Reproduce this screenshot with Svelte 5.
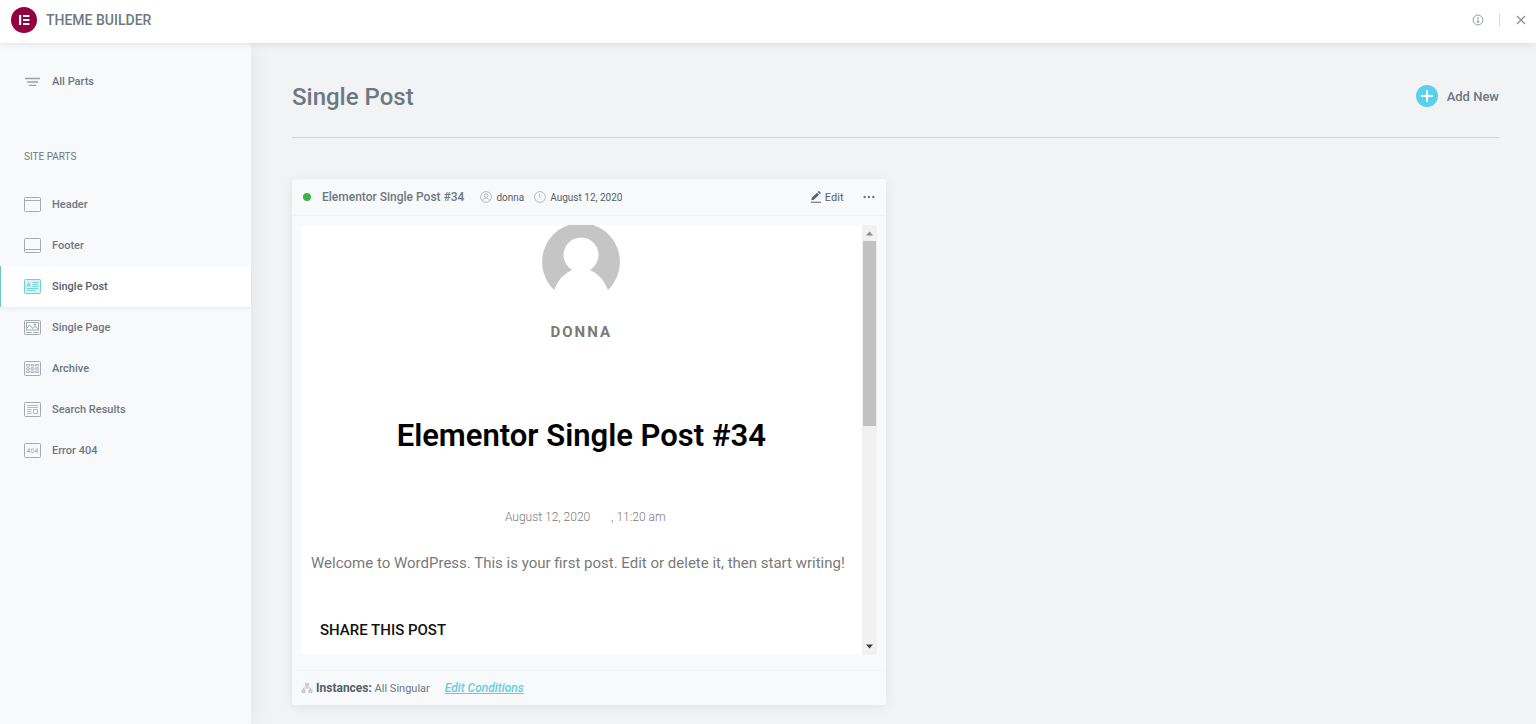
<script>
  const parts = [
    { id: 'header', label: 'Header' },
    { id: 'footer', label: 'Footer' },
    { id: 'post', label: 'Single Post' },
    { id: 'page', label: 'Single Page' },
    { id: 'archive', label: 'Archive' },
    { id: 'search', label: 'Search Results' },
    { id: 'error', label: 'Error 404' }
  ];
  let active = $state('post');
</script>

<div class="app">
  <header class="topbar">
    <svg class="logo" viewBox="0 0 26 26" aria-hidden="true">
      <circle cx="13" cy="13" r="13" fill="#93003f" />
      <path d="M8 8h2.2v10H8zM12 8h6.4v2.1H12zM12 12h6.4v2.1H12zM12 15.9h6.4V18H12z" fill="#fff" />
    </svg>
    <h1>Theme Builder</h1>
    <div class="tools">
      <button aria-label="Info">
        <svg width="12" height="12" viewBox="0 0 12 12" fill="none" stroke="#8d9499">
          <circle cx="6" cy="6" r="4.9" stroke-width="0.9" />
          <path d="M6 3v5.400M4.500 7.600L6 8.600l1.500-1" stroke-width="0.9" />
        </svg>
      </button>
      <span class="divider"></span>
      <button aria-label="Close">
        <svg width="12" height="12" viewBox="0 0 12 12" fill="none" stroke="#8d9499" stroke-width="1.4">
          <path d="M2 2l8 8M10 2l-8 8" />
        </svg>
      </button>
    </div>
  </header>

  <div class="body">
    <nav class="sidebar" aria-label="Site parts">
      <a class="item" href="#all">
        <svg class="part" viewBox="0 0 17 15" fill="none" stroke="#98a2a8" stroke-width="1.300">
          <path d="M1 4.500h15M3 8h11M4.800 11.300h7.400" />
        </svg>
        All Parts
      </a>
      <h2>Site Parts</h2>
      <ul>
        {#each parts as part}
          <li>
            <a
              class="item"
              class:active={active === part.id}
              href="#{part.id}"
              onclick={() => (active = part.id)}
            >
              <svg class="part" viewBox="0 0 17 15" fill="none" stroke="currentColor" stroke-width="1">
                <rect x="0.5" y="0.5" width="16" height="14" rx="0.8" />
                {#if part.id === 'header'}
                  <path d="M.5 3.500h16" />
                {:else if part.id === 'footer'}
                  <path d="M.5 11.500h16" />
                {:else if part.id === 'post'}
                  <rect x="1" y="1" width="15" height="13" fill="#d8f3f5" stroke="none" />
                  <path d="M2.800 8l1.800-4.500L6.400 8M3.400 6.500h2.400M8.500 3.500h6M8.500 5.500h6M8.500 7.500h6M2.500 9.500h12M2.500 11.500h9" stroke-width="0.9" />
                {:else if part.id === 'page'}
                  <rect x="2.500" y="2.500" width="12" height="7.500" />
                  <path d="M2.500 8.500l3.200-3.500 3 3.500 2.300-2 3.500 2.500M2.300 12.500h5.500M9.500 12.500h5.200" />
                  <circle cx="11" cy="4.700" r="0.900" />
                {:else if part.id === 'archive'}
                  <path d="M2.500 3.500h3v1.500h-3zM7 3.500h3v1.500h-3zM11.500 3.500h3v1.500h-3zM2.500 6.800h3v1.500h-3zM7 6.800h3v1.500h-3zM11.500 6.800h3v1.500h-3zM2.500 10h3v1.500h-3zM7 10h3v1.500h-3zM11.500 10h3v1.500h-3z" stroke-width="0.8" />
                {:else if part.id === 'search'}
                  <path d="M3 3.500h11M3 5.500h11M3 7.500h4.500M3 9.500h4.500M3 11.500h4.500M9.500 7.500h4v4h-4z" stroke-width="0.8" />
                {:else}
                  <path d="M5.200 10V5.500L3 8.500h3M13.200 10V5.500L11 8.500h3" stroke-width="0.8" />
                  <rect x="7.300" y="5.700" width="2.400" height="4" rx="1.100" stroke-width="0.8" />
                {/if}
              </svg>
              {part.label}
            </a>
          </li>
        {/each}
      </ul>
    </nav>

    <main>
      <div class="title-row">
        <h2>Single Post</h2>
        <button class="add">
          <svg width="22" height="22" viewBox="0 0 22 22" aria-hidden="true">
            <circle cx="11" cy="11" r="11" fill="#58d0f0" />
            <path d="M11 5v12M5 11h12" stroke="#fff" stroke-width="2" />
          </svg>
          Add New
        </button>
      </div>

      <div class="grid">
        <article class="card">
          <div class="card-head">
            <span class="dot"></span>
            <h3>Elementor Single Post #34</h3>
            <span class="meta">
              <svg width="12" height="12" viewBox="0 0 12 12" fill="none" stroke="#b4babf">
                <circle cx="6" cy="6" r="5.400" />
                <circle cx="6" cy="4.600" r="1.800" />
                <path d="M2.500 9.800c.4-2 1.700-2.800 3.500-2.800s3.100.8 3.500 2.800" />
              </svg>
              donna
            </span>
            <span class="meta">
              <svg width="12" height="12" viewBox="0 0 12 12" fill="none" stroke="#b4babf">
                <circle cx="6" cy="6" r="5.400" />
                <path d="M5.700 3v3.200l1.600 1.400" />
              </svg>
              August 12, 2020
            </span>
            <button class="edit">
              <svg width="12" height="12" viewBox="0 0 12 12" fill="#556068" aria-hidden="true">
                <path d="M1.300 9.300l.5-2.500L7 1.700l2.100 2.100-5.200 5zM7.700 1l.7-.7c.3-.3.700-.3 1 0l1.100 1.100c.3.300.3.700 0 1l-.7.700zM1 10.700h10v1H1z" />
              </svg>
              Edit
            </button>
            <button aria-label="More actions">
              <svg width="12" height="4" viewBox="0 0 12 4" fill="#6d7882">
                <circle cx="1.700" cy="2" r="1.200" /><circle cx="6" cy="2" r="1.200" /><circle cx="10.300" cy="2" r="1.200" />
              </svg>
            </button>
          </div>

          <div class="preview">
            <div class="page">
              <svg width="78" height="70" viewBox="0 0 78 70" aria-hidden="true">
                <path
                  fill="#c5c5c5"
                  d="M26.700 0H51.300A39 39 0 0 1 66 65Q60 50 48 45A17.500 17.500 0 1 0 30 45Q18 50 12 65A39 39 0 0 1 26.700 0z"
                />
              </svg>
              <p class="author">Donna</p>
              <h4>Elementor Single Post #34</h4>
              <p class="stamp"><span>August 12, 2020</span><span>, 11:20 am</span></p>
              <p class="welcome">
                Welcome to WordPress. This is your first post. Edit or delete it, then start writing!
              </p>
              <h5>Share this post</h5>
            </div>
            <div class="scroll" aria-hidden="true">
              <svg width="15" height="16" viewBox="0 0 15 16"><path d="M4 10.500l3.500-4 3.500 4z" fill="#8c8c8c" /></svg>
              <div class="thumb"></div>
              <svg width="15" height="16" viewBox="0 0 15 16"><path d="M4 5.500h7l-3.500 4z" fill="#404040" /></svg>
            </div>
          </div>

          <div class="card-foot">
            <svg width="12" height="12" viewBox="0 0 12 12" fill="#d5d9dc" stroke="#b8bdc1" stroke-width="0.8" aria-hidden="true">
              <rect x="4.500" y="1.500" width="3" height="2.500" />
              <rect x="1" y="8" width="3" height="2.500" />
              <rect x="8" y="8" width="3" height="2.500" />
              <path d="M6 4v2M2.500 8V6h7v2" fill="none" />
            </svg>
            <span><strong>Instances:</strong> All Singular</span>
            <a href="#conditions">Edit Conditions</a>
          </div>
        </article>
      </div>
    </main>
  </div>
</div>

<style>
  :global(body) {
    background: #f1f3f5;
  }
  .app {
    min-height: 100vh;
    display: flex;
    flex-direction: column;
    font-family: Roboto, sans-serif;
    font-size: 11px;
    color: #6d7882;
  }
  h1, h2, h3, h4, h5, p, ul {
    margin: 0;
    padding: 0;
    font-weight: 500;
  }
  ul {
    list-style: none;
  }
  button {
    display: flex;
    align-items: center;
    padding: 0;
    border: 0;
    background: none;
    font: inherit;
    color: inherit;
    cursor: pointer;
  }
  a {
    color: inherit;
    text-decoration: none;
  }
  svg {
    flex: none;
    display: block;
  }
  .topbar {
    position: relative;
    z-index: 1;
    display: flex;
    align-items: center;
    height: 43px;
    box-sizing: border-box;
    padding: 0 9px 3px 11px;
    background: #fff;
    box-shadow: 0 0 8px rgba(0, 0, 0, 0.12);
  }
  .logo {
    width: 26px;
    height: 26px;
    margin-right: 9px;
  }
  h1 {
    font-size: 14px;
    text-transform: uppercase;
  }
  .tools {
    display: flex;
    align-items: center;
    gap: 15px;
    margin-left: auto;
  }
  .divider {
    width: 1px;
    height: 12px;
    background: #d5dadf;
  }
  .body {
    flex: 1;
    display: flex;
  }
  .sidebar {
    flex: none;
    width: 251px;
    padding-top: 18px;
    background: #f7f9fb;
    box-shadow: 0 0 24px rgba(0, 0, 0, 0.07);
  }
  .item {
    display: flex;
    align-items: center;
    gap: 11px;
    height: 41px;
    box-sizing: border-box;
    padding-left: 24px;
    font-weight: 500;
  }
  .part {
    width: 17px;
    height: 15px;
    color: #a4abb1;
  }
  .active {
    padding-left: 23px;
    border-left: 1px solid #6ec5cb;
    background: #fff;
    color: #556068;
    box-shadow: 0 2px 4px rgba(0, 0, 0, 0.05);
  }
  .active .part {
    color: #6fcfd6;
  }
  .sidebar h2 {
    margin: 45px 0 17px 24px;
    font-size: 10px;
    line-height: 20px;
    font-weight: 400;
    text-transform: uppercase;
  }
  main {
    flex: 1;
    min-width: 0;
    padding: 31px 37px 19px 41px;
  }
  .title-row {
    display: flex;
    align-items: flex-start;
    justify-content: space-between;
    height: 63px;
    border-bottom: 1px solid #d0d5d9;
  }
  .title-row h2 {
    font-size: 24px;
    line-height: 46px;
  }
  .add {
    gap: 9px;
    height: 44px;
    font-size: 13px;
    font-weight: 500;
  }
  .grid {
    display: grid;
    grid-template-columns: 1fr 1fr;
    gap: 20px;
    margin-top: 41px;
  }
  .card {
    border-radius: 3px;
    background: #f8f9fb;
    box-shadow: 0 2px 12px rgba(0, 0, 0, 0.07);
  }
  .card-head {
    display: flex;
    align-items: center;
    height: 36px;
    padding: 0 11px;
    border-bottom: 1px solid #f1f3f5;
  }
  .dot {
    width: 8px;
    height: 8px;
    margin-right: 11px;
    border-radius: 50%;
    background: #39b54a;
  }
  h3 {
    margin-right: 16px;
    font-size: 12px;
  }
  .meta {
    display: flex;
    align-items: center;
    gap: 4px;
    margin-right: 10px;
    font-size: 10px;
    color: #556068;
  }
  .edit {
    gap: 3px;
    margin-left: auto;
    margin-right: 19px;
    color: #556068;
  }
  .preview {
    display: flex;
    margin: 9px 9px 15px;
    border-radius: 3px;
    overflow: hidden;
    background: #fff;
  }
  .page {
    flex: 1;
    min-width: 0;
    display: flex;
    flex-direction: column;
    align-items: center;
    padding: 0 10px 12px;
    color: #7a7a7a;
  }
  .author {
    margin-top: 26px;
    font-size: 15px;
    line-height: 22px;
    font-weight: 700;
    letter-spacing: 2px;
    text-transform: uppercase;
  }
  h4 {
    margin-top: 73px;
    font-size: 31px;
    line-height: 40px;
    font-weight: 600;
    color: #000;
  }
  .stamp {
    display: flex;
    gap: 21px;
    margin: 51px 0 0 8px;
    font-size: 12px;
    line-height: 20px;
    font-weight: 300;
  }
  .welcome {
    align-self: flex-start;
    margin-top: 24px;
    font-size: 15px;
    line-height: 24px;
    font-weight: 400;
  }
  h5 {
    align-self: flex-start;
    margin: 43px 0 0 9px;
    font-size: 15px;
    line-height: 25px;
    color: #111;
    text-transform: uppercase;
  }
  .scroll {
    flex: none;
    display: flex;
    flex-direction: column;
    width: 15px;
    background: #f1f1f1;
  }
  .scroll svg:last-child {
    margin-top: auto;
  }
  .thumb {
    height: 43%;
    margin: 0 1px;
    background: #c1c1c1;
  }
  .card-foot {
    display: flex;
    align-items: center;
    gap: 3px;
    height: 34px;
    padding: 0 9px;
    border-top: 1px solid #f4f5f7;
  }
  .card-foot strong {
    font-size: 12px;
    font-weight: 700;
    color: #556068;
  }
  .card-foot a {
    margin-left: 12px;
    font-size: 12px;
    font-style: italic;
    font-weight: 500;
    color: #5fd0dc;
    text-decoration: underline;
  }
</style>
